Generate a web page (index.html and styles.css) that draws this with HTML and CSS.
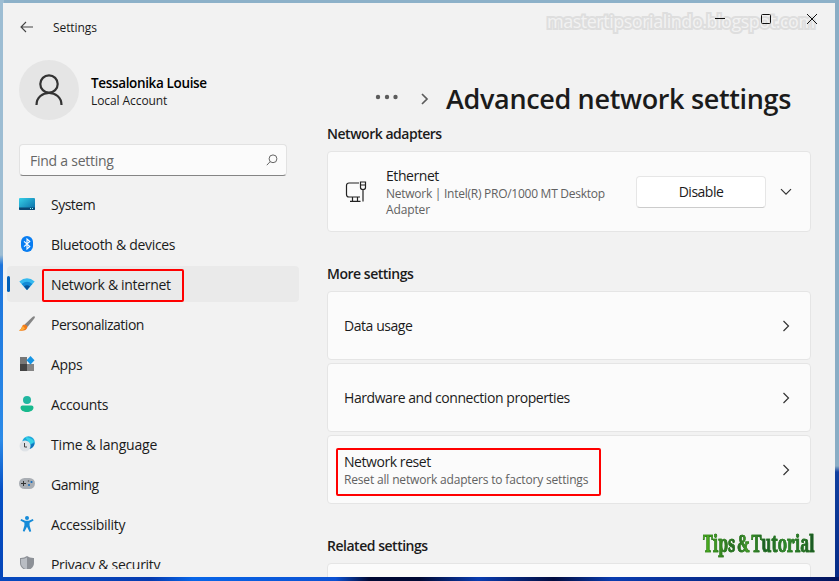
FILE: index.html
```html
<!DOCTYPE html>
<html lang="en">
<head>
<meta charset="utf-8">
<title>Settings</title>
<link rel="stylesheet" href="styles.css">
</head>
<body>
<div class="window">
  <header class="titlebar">
    <svg class="back" width="14" height="12" viewBox="0 0 14 12"><path d="M13 6H1.2M6 1 1 6l5 5" fill="none" stroke="#444" stroke-width="1.1"/></svg>
    <span class="apptitle">Settings</span>
    <svg class="controls" width="105" height="14" viewBox="0 0 105 14" fill="none" stroke="#111"><path d="M2 6.500h10M94 2l10 10M104 2l-10 10"/><rect x="48.500" y="2.500" width="9" height="9" rx="1"/></svg>
  </header>
  <div class="watermark">mastertipsorialindo.blogspot.com</div>
  <div class="body">
    <aside class="side">
      <div class="profile">
        <div class="avatar"><svg width="28" height="32" viewBox="0 0 28 32" fill="none" stroke="#333" stroke-width="2.2"><circle cx="14" cy="10" r="8.700"/><path d="M1.500 31C1.500 15 26.500 15 26.500 31"/></svg></div>
        <div class="who"><div class="name">Tessalonika Louise</div><div class="kind">Local Account</div></div>
      </div>
      <div class="search"><span>Find a setting</span><svg width="12" height="12" viewBox="0 0 12 12" fill="none" stroke="#666"><circle cx="7" cy="4.800" r="3.900"/><path d="M4.200 7.600.800 11.200"/></svg></div>
      <nav>
        <div class="item"><svg viewBox="0 0 16 16"><defs><linearGradient id="sys" x2="1" y2="1"><stop stop-color="#36d0e8"/><stop offset="1" stop-color="#0868a4"/></linearGradient></defs><rect y="2" width="16" height="12" rx="1" fill="url(#sys)"/><path d="M0 11.500h16V13a1 1 0 0 1-1 1H1a1 1 0 0 1-1-1z" fill="#0b4774"/><path d="M11 12.500h1m1 0h1" stroke="#8ff"/></svg><span class="t1">System</span></div>
        <div class="item"><svg viewBox="0 0 16 16"><rect x="2" width="12" height="16" rx="6" fill="#087df1"/><path d="m5 5.300 5.800 5.200L8 13V3l2.800 2.500L5 10.700" fill="none" stroke="#fff" stroke-width="1.100"/></svg><span class="t2">Bluetooth &amp; devices</span></div>
        <div class="item active"><svg viewBox="0 0 16 16"><path d="M.300 5.500Q8-1 15.700 5.500L8 14z" fill="#35b9ef"/><path d="M2.700 8Q8 3.500 13.300 8L8 14z" fill="#128ad5"/><path d="M5 10.600Q8 8 11 10.600L8 14z" fill="#08549b"/></svg><span class="t3">Network &amp; internet</span></div>
        <div class="item"><svg viewBox="0 0 16 16"><path d="M15.500.300q.8 1-.2 2.300L8.500 11 5.600 8.600 13.500.900q1.200-1 2-.6" fill="#858585"/><path d="M5.300 8.400Q8 8.500 8.500 11 7 16 0 14.500 2.500 13 3 10.500q.7-2 2.300-2.100" fill="#f07a19"/><path d="M3.500 9.500q-.2 3.200-3.500 5 4 .4 6-2z" fill="#ffad38"/></svg><span class="t4">Personalization</span></div>
        <div class="item"><svg viewBox="0 0 16 16"><path d="M1 1h7v7H1z" fill="#777"/><path d="M1 8h7v7H1z" fill="#444"/><path d="M8 8h7v7H8z" fill="#858585"/><path d="m11.500 0 4 4.300-4 4.200-4-4.200z" fill="#1695e4"/></svg><span class="t5">Apps</span></div>
        <div class="item"><svg viewBox="0 0 16 16"><circle cx="8" cy="4" r="4" fill="#21b6a0"/><path d="M3.500 9.500h9a2 2 0 0 1 2 2c0 6-13 6-13 0a2 2 0 0 1 2-2" fill="#18b98d"/></svg><span class="t6">Accounts</span></div>
        <div class="item"><svg viewBox="0 0 16 16"><circle cx="9.500" cy="6.500" r="6.300" fill="#1fa9dc"/><path d="M6 1q5 0 9 4-1 3-4 3z" fill="#37d2e6"/><path d="M10 13q5-1 5.500-6l-3 1z" fill="#1174bc"/><circle cx="6" cy="10" r="5.500" fill="#dfe3e7"/><path d="M5.500 7v4H8" fill="none" stroke="#444"/></svg><span class="t7">Time &amp; language</span></div>
        <div class="item"><svg viewBox="0 0 16 16"><rect y="2" width="16" height="11" rx="5.500" fill="#a9aeb4"/><path d="M2 7.500h5M4.500 5v5" stroke="#333"/><circle cx="10" cy="9" r="1" fill="#176cbb"/><circle cx="12.500" cy="6" r="1.100" fill="#176cbb"/><circle cx="9.500" cy="5" r=".8" fill="#555"/></svg><span class="t8">Gaming</span></div>
        <div class="item"><svg viewBox="0 0 16 16" fill="#168bd8"><circle cx="8" cy="2" r="2"/><path d="m2.200 3 4 1.800h3.600l4-1.800.8 1.500-4 2.300v2.700l1.600 5.800-1.600.7L8 10.700 5.400 15.800l-1.600-.7 1.600-5.600V6.800l-4-2.300z"/></svg><span class="t9">Accessibility</span></div>
        <div class="item"><svg viewBox="0 0 16 16"><path d="M8 0q3 2.200 7 2v5q0 5-7 8-7-3-7-8V2q4 .2 7-2" fill="#8d9197"/><path d="M8 1.500Q5 3 2 3v4q0 4 6 7z" fill="#b9bdc3"/></svg><span class="t10">Privacy &amp; security</span></div>
      </nav>
    </aside>
    <main class="main">
      <div class="crumbs"><svg width="56" height="12" viewBox="0 0 56 12"><g fill="#5c5c5c"><circle cx="3" cy="4" r="2.200"/><circle cx="12" cy="4" r="2.200"/><circle cx="20.500" cy="4" r="2.200"/></g><path d="m47 1 5 5-5 5" fill="none" stroke="#5c5c5c" stroke-width="1.700"/></svg><h1>Advanced network settings</h1></div>
      <h2 class="h-adapters">Network adapters</h2>
      <section class="card ethernet">
        <svg class="eth" width="22" height="22" viewBox="0 0 22 22" fill="none" stroke="#222" stroke-width="1.200"><path d="M14 2H4A2.500 2.500 0 0 0 1.500 4.500v9A2.500 2.500 0 0 0 4 16H15M7.500 16v4m5-4v4M5 20.300h10.500M18 9v11.500"/><path d="M15.500 1h5v5.500q0 2-2.500 2t-2.500-2zM15.500 4h5"/></svg>
        <div class="desc"><div class="label e1">Ethernet</div><div class="sub"><span class="e2">Network | Intel(R) PRO/1000 MT Desktop</span><br><span class="e3">Adapter</span></div></div>
        <button>Disable</button>
        <svg class="down" width="12" height="8" viewBox="0 0 12 8"><path d="m1 1.200 5 5 5-5" fill="none" stroke="#333" stroke-width="1.200"/></svg>
      </section>
      <h2 class="h-more">More settings</h2>
      <div class="list">
        <section class="card row"><span class="label r1">Data usage</span><svg class="chev" width="8" height="12" viewBox="0 0 8 12"><path d="m1.500 1 5 5-5 5" fill="none" stroke="#333" stroke-width="1.200"/></svg></section>
        <section class="card row"><span class="label r2">Hardware and connection properties</span><svg class="chev" width="8" height="12" viewBox="0 0 8 12"><path d="m1.500 1 5 5-5 5" fill="none" stroke="#333" stroke-width="1.200"/></svg></section>
        <section class="card row"><div class="reset"><div class="label r3">Network reset</div><div class="sub r4">Reset all network adapters to factory settings</div></div><svg class="chev" width="8" height="12" viewBox="0 0 8 12"><path d="m1.500 1 5 5-5 5" fill="none" stroke="#333" stroke-width="1.200"/></svg></section>
      </div>
      <h2 class="h-related">Related settings</h2>
      <section class="card last"></section>
    </main>
  </div>
  <div class="brand">Tips &amp; Tutorial</div>
</div>
</body>
</html>
```
FILE: styles.css
```css
*, *::before, *::after { box-sizing: border-box; }
body {
  margin: 0; width: 839px; height: 581px; padding: 3px 4px 4px 3px; overflow: hidden;
  font-family: "Open Sans", "Noto Sans", sans-serif; color: #1b1b1b;
  background:
    linear-gradient(90deg, #0648bd, #0848bd 8%, #063bb0 18%, #0866e8 23%, #0c51d2 40%, #010a35 44%, #010a35 50%, #0a3cb0 57%, #020d40 66%, #0a3cb0 73%, #03145c) 0 577px / 100% 4px no-repeat,
    linear-gradient(#9dbdd3 0 255px, #1c74dc 265px, #2c8be8 440px, #0650c5 490px, #0545b8) 0 0 / 4px 100% no-repeat,
    linear-gradient(#8aadc5 0 466px, #1240a0 472px, #062a85) 835px 0 / 4px 100% no-repeat,
    #8db1c9;
}
.window { position: relative; height: 574px; background: #f2f2f2; overflow: hidden; white-space: nowrap; }
.titlebar { display: flex; height: 50px; padding: 9px 17px 0 17px; }
.back { margin-top: 9px; }
.apptitle { margin: 7px 0 0 19px; font-size: 12px; line-height: 18px; letter-spacing: -.08px; }
.controls { margin: 0 0 0 auto; }
.watermark { position: absolute; left: 544px; top: 6px; font-size: 18px; line-height: 24px; color: #f2f2f2; -webkit-text-stroke: 4px #dedede; paint-order: stroke fill; letter-spacing: -.48px; z-index: 1; }
.titlebar .controls { position: relative; z-index: 2; }
.body { display: flex; }
.side { width: 324px; height: 516px; overflow: hidden; padding: 7px 0 0 4px; }
.profile { display: flex; align-items: center; height: 60px; padding-left: 12px; gap: 12px; }
.avatar { width: 60px; height: 60px; border-radius: 50%; background: #e5e5e5; display: flex; align-items: center; justify-content: center; }
.who { padding-top: 3px; }
.name { font-size: 13.500px; font-weight: 600; line-height: 18px; color: #000; letter-spacing: -.35px; }
.kind { font-size: 12px; line-height: 17px; letter-spacing: -.08px; }
.search { display: flex; align-items: center; justify-content: space-between; width: 268px; height: 32px; margin: 24px 0 10px 12px; padding: 0 8px 0 10px; border: 1px solid #e2e2e2; border-bottom-color: #858585; border-radius: 4px; background: #fbfbfb; font-size: 14px; color: #666; letter-spacing: -.25px; }
.item { position: relative; display: flex; align-items: center; gap: 16px; width: 292px; height: 36px; margin-bottom: 4px; padding-left: 12px; border-radius: 4px; font-size: 14px; letter-spacing: -.31px; }
.item svg { width: 16px; height: 16px; margin-top: -1px; }
.item span { padding-top: 1px; }
.t1, .t4, .t8 { letter-spacing: -.5px; }
.t7 { letter-spacing: -.18px; }
.active { background: #eaeaea; }
.active::before { content: ""; position: absolute; left: 0; top: 10px; width: 3px; height: 16px; border-radius: 2px; background: #005fb8; }
.active::after { content: ""; position: absolute; left: 35px; top: 3px; width: 142px; height: 33px; border: 2px solid #f00; border-radius: 2px; }
.main { width: 484px; height: 524px; overflow: hidden; }
.crumbs { display: flex; align-items: center; height: 88px; padding: 4px 0 0 48px; }
h1 { margin: 0 0 0 15px; font-size: 27px; font-weight: 600; line-height: 36px; letter-spacing: -.34px; }
h2 { margin: 0; font-size: 14px; font-weight: 600; line-height: 20px; letter-spacing: -.48px; }
.card { border: 1px solid #e5e5e5; border-radius: 4px; background: #fbfbfb; }
.label { font-size: 14px; line-height: 20px; letter-spacing: -.44px; }
.sub { font-size: 12px; line-height: 16px; color: #616161; }
.e2 { letter-spacing: -.26px; }
.e3 { letter-spacing: -.12px; }
.h-adapters { margin-top: -17px; height: 20px; }
.ethernet { display: flex; align-items: center; height: 81px; margin-top: 7px; padding: 0 18px 0 17px; }
.desc { width: 232px; margin-left: 19px; margin-top: 1px; }
button { width: 130px; height: 32px; margin-left: 18px; padding: 0; border: 1px solid #e6e6e6; border-bottom-color: #ccc; border-radius: 4px; background: #fff; font: 14px "Open Sans", sans-serif; color: #1b1b1b; letter-spacing: -.5px; }
.down { margin-left: 14px; }
.h-more, .h-related { margin-top: 32px; height: 20px; }
.list { display: grid; gap: 3px; margin-top: 7px; }
.row { display: flex; align-items: center; justify-content: space-between; height: 69px; padding: 0 20px 0 16px; }
.reset { width: 265px; height: 48px; margin: 4px 0 0 -8px; padding: 2px 0 0 6px; border: 2px solid #f00; border-radius: 2px; }
.r4 { letter-spacing: -.17px; }
.last { height: 60px; margin-top: 7px; }
.brand { position: absolute; left: 700px; top: 525px; font: bold 23px/30px "Noto Serif", "DejaVu Serif", serif; letter-spacing: 0; word-spacing: -3px; transform: scaleX(.66); transform-origin: 0 0; background: linear-gradient(90deg, #50b51c, #236425 30%, #48a329 40%, #195d26 55%, #318b2c 75%, #185425); background-clip: text; -webkit-text-fill-color: transparent; -webkit-text-stroke: .7px #28751e; }
```
